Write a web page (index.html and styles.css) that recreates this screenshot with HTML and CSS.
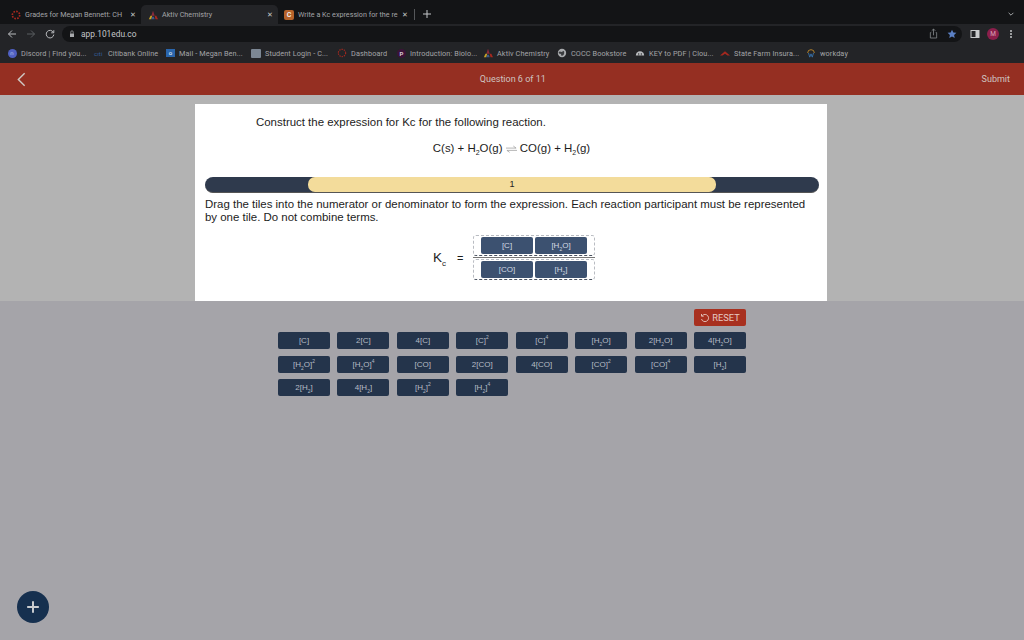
FILE: index.html
```html
<!DOCTYPE html>
<html lang="en">
<head>
    <meta charset="UTF-8">
    <meta name="viewport" content="width=device-width, initial-scale=1.0">
    <title>Aktiv Chemistry</title>
    <link rel="stylesheet" href="styles.css">
</head>
<body>
    <!-- browser tabs -->
    <div class="tabs">
        <div class="tab tab-one">
            <svg class="fav" viewBox="0 0 12 12"><circle cx="6" cy="6" r="4.4" fill="none" stroke="#a5281f" stroke-width="2" stroke-dasharray="2 1.4"/></svg>
            <span class="tab-title">Grades for Megan Bennett: CH</span>
            <span class="tab-x">✕</span>
        </div>
        <div class="tab tab-active">
            <svg class="fav" viewBox="0 0 12 12"><path d="M6 1 8 7H4z" fill="#8a2b3a"/><path d="M1 11 3 7h2l-1 4z" fill="#c9a227"/><path d="M8 7h2l2 4H9z" fill="#a5281f"/><path d="M5 8h2l1 3H4z" fill="#3b5a8a"/></svg>
            <span class="tab-title">Aktiv Chemistry</span>
            <span class="tab-x">✕</span>
        </div>
        <div class="tab tab-three">
            <span class="fav fav-c">C</span>
            <span class="tab-title">Write a Kc expression for the re</span>
            <span class="tab-x">✕</span>
        </div>
        <span class="tab-sep"></span>
        <svg class="tab-new" viewBox="0 0 10 10"><path d="M5 1v8M1 5h8" stroke="#c4c6c9" stroke-width="1" fill="none"/></svg>
        <svg class="tab-more" viewBox="0 0 10 10"><path d="M2 3.5 5 6.5 8 3.5" stroke="#c4c6c9" stroke-width="1" fill="none"/></svg>
    </div>

    <!-- address bar -->
    <div class="toolbar">
        <svg class="nav-icon" viewBox="0 0 10 10"><path d="M9 5H1.5M5 1.5 1.5 5 5 8.5" stroke="#b9bbbe" fill="none"/></svg>
        <svg class="nav-icon" viewBox="0 0 10 10"><path d="M1 5h7.5M5 1.5 8.5 5 5 8.5" stroke="#5b5e62" fill="none"/></svg>
        <svg class="nav-icon" viewBox="0 0 10 10"><path d="M8.4 3.4A3.8 3.8 0 1 0 8.8 5.6M8.8 1.2v2.6H6.2" stroke="#b9bbbe" fill="none"/></svg>
        <div class="omnibox">
            <svg class="lock" viewBox="0 0 6 8"><path d="M1 3.5h4V7H1z" fill="#a8aaad"/><path d="M1.8 3.5V2a1.2 1.2 0 0 1 2.4 0v1.5" stroke="#a8aaad" fill="none" stroke-width=".7"/></svg>
            <span class="url">app.101edu.co</span>
            <svg class="omni-share" viewBox="0 0 10 12"><path d="M2.5 5H1.5v6h7V5h-1M5 8V1M3 3 5 1l2 2" stroke="#85888b" fill="none" stroke-width=".9"/></svg>
            <svg class="omni-star" viewBox="0 0 12 12"><path d="M6 .8 7.6 4.2l3.7.4-2.8 2.5.8 3.7L6 8.9l-3.3 1.9.8-3.7L.7 4.6l3.7-.4z" fill="#5b80c4"/></svg>
        </div>
        <svg class="side-icon" viewBox="0 0 10 10"><rect x="1" y="1.5" width="8" height="7" fill="none" stroke="#c8cacc"/><rect x="5.5" y="1.5" width="3.5" height="7" fill="#c8cacc"/></svg>
        <span class="avatar">M</span>
        <span class="dots"><i></i><i></i><i></i></span>
    </div>

    <!-- bookmarks -->
    <div class="bookmarks">
        <a class="mark mark-discord"><span class="dot dot-discord">⌾</span>Discord | Find you...</a>
        <a class="mark mark-citi"><span class="citi">cıti</span>Citibank Online</a>
        <a class="mark mark-mail"><span class="dot-mail">o</span>Mail - Megan Ben...</a>
        <a class="mark mark-student"><span class="dot-student"></span>Student Login - C...</a>
        <a class="mark mark-dash"><svg class="fav" viewBox="0 0 12 12"><circle cx="6" cy="6" r="4.4" fill="none" stroke="#a5281f" stroke-width="1.4" stroke-dasharray="1.6 1.2"/></svg>Dashboard</a>
        <a class="mark mark-intro"><span class="dot dot-p">P</span>Introduction: Biolo...</a>
        <a class="mark mark-aktiv"><svg class="fav" viewBox="0 0 12 12"><path d="M6 1 8 7H4z" fill="#8a2b3a"/><path d="M1 11 3 7h2l-1 4z" fill="#c9a227"/><path d="M8 7h2l2 4H9z" fill="#a5281f"/><path d="M5 8h2l1 3H4z" fill="#3b5a8a"/></svg>Aktiv Chemistry</a>
        <a class="mark mark-cocc"><svg class="fav" viewBox="0 0 12 12"><circle cx="6" cy="6" r="5" fill="#a8aaad"/><path d="M2 5c2-2 3 1 5-1s2 3 1 4-3 2-3 0-3 0-3-3z" fill="#3a3c3f"/></svg>COCC Bookstore</a>
        <a class="mark mark-key"><svg class="fav" viewBox="0 0 12 12"><path d="M1 9a5 5 0 0 1 10 0z" fill="#b9bbbe"/><path d="M4 9V6h1v3zM7 9V6h1v3z" fill="#35363a"/></svg>KEY to PDF | Clou...</a>
        <a class="mark mark-farm"><svg class="fav" viewBox="0 0 12 12"><path d="M0 9 6 4l6 5H9L6 7 3 9z" fill="#a5281f"/></svg>State Farm Insura...</a>
        <a class="mark mark-work"><svg class="fav" viewBox="0 0 12 12"><path d="M2 6a4 4 0 0 1 8 0" stroke="#c9902c" fill="none"/><path d="M3 6l1.5 5L6 7l1.500 4L9 6" stroke="#3b78b5" fill="none"/></svg>workday</a>
    </div>

    <!-- app header -->
    <header class="topbar">
        <svg class="back" viewBox="0 0 10 16"><path d="M8.500 1 1.500 8l7 7" stroke="#cfc8c4" stroke-width="1.600" fill="none"/></svg>
        <div class="question-count">Question 6 of 11</div>
        <div class="submit">Submit</div>
    </header>

    <div class="upper">
        <div class="card">
            <p class="prompt">Construct the expression for Kc for the following reaction.</p>
            <p class="reaction">C(s) + H<sub>2</sub>O(g)
                <svg class="equil" viewBox="0 0 12 8"><path d="M0 3h11L8 .8M12 5.500H1L4 7.700" stroke="#9a9a9a" stroke-width=".8" fill="none"/></svg>
                CO(g) + H<sub>2</sub>(g)</p>
            <div class="progress"><div class="progress-fill">1</div></div>
            <p class="instructions">Drag the tiles into the numerator or denominator to form the expression. Each reaction participant must be represented by one tile. Do not combine terms.</p>
            <div class="equation">
                <span class="kc">K<sub>c</sub></span>
                <span class="equals">=</span>
                <div class="fraction">
                    <div class="slot slot-top">
                        <span class="chip">[C]</span>
                        <span class="chip">[H<sub>2</sub>O]</span>
                    </div>
                    <div class="fraction-line"></div>
                    <div class="slot slot-bottom">
                        <span class="chip">[CO]</span>
                        <span class="chip">[H<sub>2</sub>]</span>
                    </div>
                </div>
            </div>
        </div>
    </div>

    <div class="lower">
        <div class="tile-grid">
            <button class="reset">
                <svg class="reset-icon" viewBox="0 0 10 10"><path d="M2.300 2.600A3.600 3.600 0 1 1 1.500 6M1.500 1v2.200h2.200" stroke="#e6c9c2" fill="none" stroke-width=".9"/></svg>RESET
            </button>
            <div class="tile">[C]</div>
            <div class="tile">2[C]</div>
            <div class="tile">4[C]</div>
            <div class="tile">[C]<sup>2</sup></div>
            <div class="tile">[C]<sup>4</sup></div>
            <div class="tile">[H<sub>2</sub>O]</div>
            <div class="tile">2[H<sub>2</sub>O]</div>
            <div class="tile">4[H<sub>2</sub>O]</div>
            <div class="tile">[H<sub>2</sub>O]<sup>2</sup></div>
            <div class="tile">[H<sub>2</sub>O]<sup>4</sup></div>
            <div class="tile">[CO]</div>
            <div class="tile">2[CO]</div>
            <div class="tile">4[CO]</div>
            <div class="tile">[CO]<sup>2</sup></div>
            <div class="tile">[CO]<sup>4</sup></div>
            <div class="tile">[H<sub>2</sub>]</div>
            <div class="tile">2[H<sub>2</sub>]</div>
            <div class="tile">4[H<sub>2</sub>]</div>
            <div class="tile">[H<sub>2</sub>]<sup>2</sup></div>
            <div class="tile">[H<sub>2</sub>]<sup>4</sup></div>
        </div>
    </div>

    <button class="fab">
        <svg viewBox="0 0 12 12"><path d="M6 1v10M1 6h10" stroke="#c9ccd0" stroke-width="1.700" fill="none"/></svg>
    </button>
</body>
</html>
```

FILE: styles.css
```css
* {
    box-sizing: border-box;
}
html, body {
    margin: 0;
    height: 640px;
    overflow: hidden;
}
body {
    position: relative;
    display: flex;
    flex-direction: column;
    font-family: "Liberation Sans", Arial, sans-serif;
    background: #a5a4a9;
}
sub, sup {
    font-size: 62%;
    line-height: 0;
}

/* browser tabs */
.tabs {
    height: 24px;
    flex: none;
    display: flex;
    align-items: flex-end;
    background: #131416;
    font-family: Roboto, sans-serif;
    font-size: 7.200px;
    color: #a3a5a8;
    padding-left: 8px;
}
.tab {
    height: 19px;
    display: flex;
    align-items: center;
    gap: 4px;
    padding: 0 5px 0 3px;
    border-radius: 5px 5px 0 0;
}
.tab-one {
    width: 133px;
}
.tab-active {
    width: 137px;
    background: #232427;
    padding-left: 7px;
}
.tab-three {
    width: 134px;
    padding-left: 6px;
}
.tab-title {
    flex: 1;
    white-space: nowrap;
}
.tab-x {
    font-size: 6.500px;
    color: #c4c6c9;
}
.fav {
    width: 10px;
    height: 10px;
    flex: none;
}
.fav-c {
    background: #b5622a;
    color: #eee;
    border-radius: 2px;
    font-size: 7px;
    font-weight: bold;
    line-height: 10px;
    text-align: center;
}
.tab-sep {
    width: 1px;
    height: 11px;
    background: #55575a;
    margin: 0 7px 4px 2px;
}
.tab-new {
    width: 10px;
    height: 10px;
    margin-bottom: 5px;
}
.tab-more {
    width: 8px;
    height: 8px;
    margin: 0 9px 6px auto;
}

/* address bar */
.toolbar {
    height: 19px;
    flex: none;
    display: flex;
    align-items: center;
    gap: 9px;
    background: #232427;
    padding: 0 12px 0 7px;
}
.nav-icon {
    width: 10px;
    height: 10px;
    flex: none;
}
.omnibox {
    flex: 1;
    height: 16px;
    margin-left: -2px;
    background: #131416;
    border-radius: 8px;
    display: flex;
    align-items: center;
    padding: 0 5px 0 7px;
    font-family: Roboto, sans-serif;
    font-size: 8.400px;
    color: #c4c6c9;
}
.lock {
    width: 6px;
    height: 8px;
    margin-right: 6px;
}
.url {
    flex: 1;
}
.omni-share {
    width: 9px;
    height: 11px;
    margin-right: 9px;
}
.omni-star {
    width: 10px;
    height: 10px;
}
.side-icon {
    width: 10px;
    height: 10px;
    margin-left: -1px;
}
.avatar {
    width: 12px;
    height: 12px;
    margin-left: -2px;
    border-radius: 50%;
    background: #8c1f4c;
    color: #d9a5b8;
    font-family: Roboto, sans-serif;
    font-size: 6.500px;
    line-height: 12px;
    text-align: center;
}
.dots {
    display: flex;
    flex-direction: column;
    gap: 1px;
    margin-left: 2px;
}
.dots i {
    width: 2px;
    height: 2px;
    background: #c4c6c9;
    border-radius: 50%;
}

/* bookmarks */
.bookmarks {
    height: 20px;
    flex: none;
    display: flex;
    align-items: center;
    background: #232427;
    padding-left: 8px;
    font-family: Roboto, sans-serif;
    font-size: 7.300px;
    color: #a3a5a8;
    letter-spacing: .1px;
    white-space: nowrap;
}
.mark {
    display: flex;
    align-items: center;
    gap: 4px;
}
.mark-discord { width: 86px; }
.mark-citi { width: 72px; }
.mark-mail { width: 85px; }
.mark-student { width: 86px; }
.mark-dash { width: 60px; }
.mark-intro { width: 86px; }
.mark-aktiv { width: 74px; }
.mark-cocc { width: 78px; }
.mark-key { width: 85px; }
.mark-farm { width: 86px; }
.dot {
    width: 9px;
    height: 9px;
    border-radius: 50%;
    font-size: 6px;
    line-height: 9px;
    text-align: center;
    flex: none;
}
.dot-discord {
    background: #4f5fc0;
    color: #dfe2f5;
}
.dot-p {
    background: #3a1338;
    color: #d8c8d8;
    font-weight: bold;
}
.citi {
    color: #345f99;
    width: 10px;
    font-size: 6px;
}
.dot-mail {
    width: 9px;
    height: 8px;
    background: #2a66ad;
    color: #fff;
    font-size: 6px;
    line-height: 8px;
    text-align: center;
}
.dot-student {
    width: 10px;
    height: 9px;
    background: #7c8794;
    border-radius: 1px;
}

/* app header */
.topbar {
    height: 32px;
    flex: none;
    display: flex;
    align-items: center;
    background: #952f22;
    color: #cfc4c0;
    font-family: Roboto, sans-serif;
    font-size: 9px;
    padding: 0 14px 0 17px;
}
.back {
    width: 9px;
    height: 15px;
}
.question-count {
    flex: 1;
    text-align: center;
    padding-left: 18px;
}

/* question card */
.upper {
    height: 206px;
    flex: none;
    background: #b3b3b3;
    padding-top: 9px;
}
.card {
    width: 632px;
    height: 197px;
    margin-left: 195px;
    background: #fff;
    padding: 0 8px 0 10px;
    color: #1c1c1c;
    font-size: 11.450px;
}
.prompt {
    margin: 0;
    padding: 11px 0 0 51px;
    line-height: 15px;
}
.reaction {
    margin: 11px 0 0;
    line-height: 15px;
    text-align: center;
    padding-right: 1px;
}
.reaction sub {
    font-size: 7px;
}
.equil {
    width: 11px;
    height: 8px;
    vertical-align: -1px;
}
.progress {
    height: 16px;
    margin-top: 21px;
    background: #2f3a4d;
    border-radius: 8px;
    padding-left: 103px;
    padding-right: 103px;
    border-bottom: 1px solid #555;
}
.progress-fill {
    height: 15px;
    background: #f3dc9b;
    border-radius: 7px;
    text-align: center;
    font-size: 9px;
    line-height: 15px;
    color: #222;
}
.instructions {
    margin: 5px 0 0;
    padding-right: 8px;
    line-height: 13px;
}
.equation {
    display: flex;
    align-items: center;
    margin: 11px 0 0 228px;
}
.kc {
    font-size: 13.500px;
    width: 24px;
}
.kc sub {
    font-size: 8px;
}
.equals {
    width: 16px;
    font-size: 11px;
}
.fraction {
    width: 122px;
}
.slot {
    height: 21px;
    display: flex;
    justify-content: center;
    align-items: center;
    gap: 2px;
    border: 1px dashed #b9bcc2;
    border-bottom-color: #4a5260;
    border-radius: 3px;
}
.fraction-line {
    height: 1px;
    margin: 1px 0;
    background: #777;
}
.chip {
    width: 52px;
    height: 17px;
    background: #3c5170;
    border-radius: 2px;
    color: #d4dae4;
    font-size: 8px;
    line-height: 17px;
    text-align: center;
}

/* tile bank */
.lower {
    flex: 1;
    padding: 8px 0 0 278px;
}
.tile-grid {
    width: 468px;
    display: grid;
    grid-template-columns: repeat(8, 52px);
    justify-content: space-between;
    row-gap: 6.300px;
}
.reset {
    grid-column: 8;
    height: 17px;
    padding: 0;
    border: none;
    border-radius: 2px;
    background: #a8301f;
    color: #e6c9c2;
    font-family: Roboto, sans-serif;
    font-size: 9.300px;
    display: flex;
    align-items: center;
    justify-content: center;
    gap: 2px;
}
.reset-icon {
    width: 10px;
    height: 10px;
}
.tile {
    height: 17px;
    background: #24344b;
    border-radius: 2px;
    color: #b6bcc6;
    font-size: 8px;
    line-height: 17px;
    text-align: center;
}
.fab {
    position: absolute;
    left: 17px;
    bottom: 17px;
    width: 32px;
    height: 32px;
    padding: 9px;
    border: none;
    border-radius: 50%;
    background: #16304f;
}
.fab svg {
    display: block;
}
```
